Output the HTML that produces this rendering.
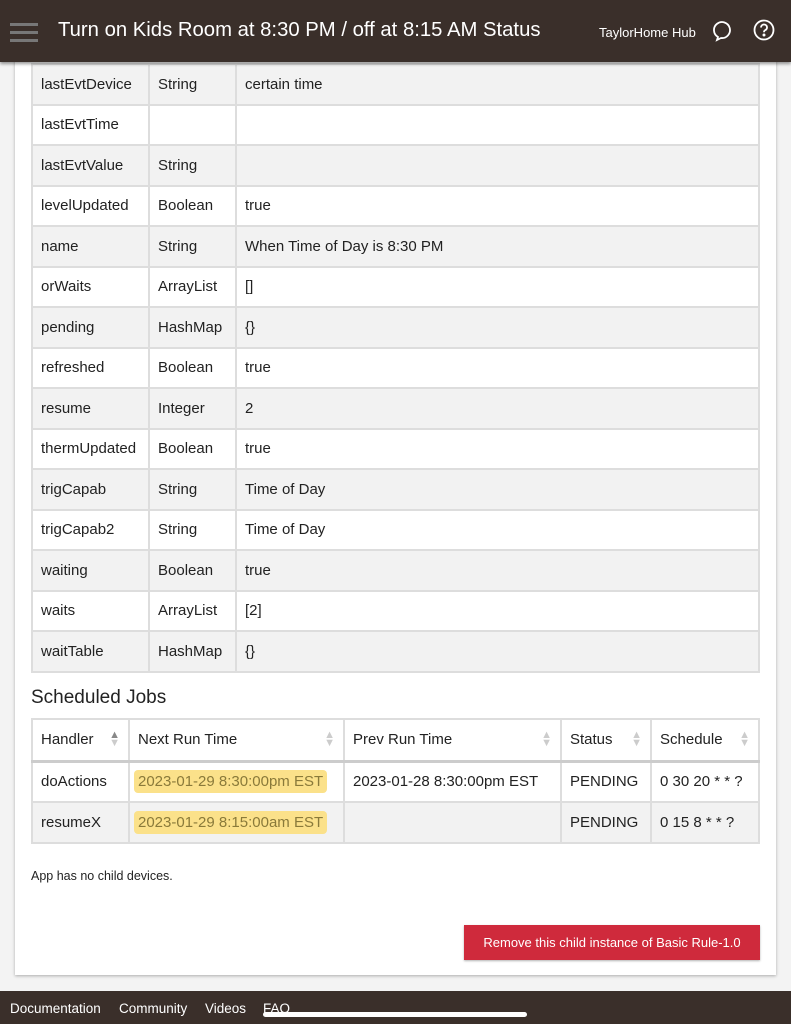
<!DOCTYPE html>
<html><head><meta charset="utf-8"><style>
*{box-sizing:border-box;margin:0;padding:0}
body{width:791px;height:1024px;overflow:hidden;background:#f3f3f3;font-family:"Liberation Sans",sans-serif;color:#222;position:relative}
.hdr{position:absolute;left:0;top:0;width:791px;height:62px;background:#3a2f2a;color:#fff;box-shadow:0 2px 3px rgba(0,0,0,.4);z-index:2}
.hdr .t{position:absolute;left:58px;top:19px;font-size:20.3px}
.hdr .hub{position:absolute;left:599px;top:25px;font-size:13px}
.burger{position:absolute;left:10px;top:23px;width:28px}
.burger i{display:block;height:3px;background:#777;margin-bottom:5px}
.card{position:absolute;left:15px;top:40px;width:761px;height:935px;background:#fff;box-shadow:0 1px 3px rgba(0,0,0,.3)}
table{border-collapse:collapse;position:absolute;left:31px;font-size:15px}
td,th{border:2px solid #ddd;padding:0 8px;text-align:left;font-weight:normal;white-space:nowrap}
.st td{height:40.5px}
.st tr:nth-child(odd){background:#f2f2f2}
.jt th{height:42px}
.jt td{height:41px}
.jt tr.g{background:#f2f2f2}
.hl{background:#fbe18a;color:#8a7a3a;border-radius:4px;padding:3px 4px;margin-left:-4px}
.arr{float:right;color:#ccc;font-size:11px;line-height:8px;margin-top:0}
.h2{position:absolute;left:31px;top:687px;font-size:19px}
.note{position:absolute;left:31px;top:869px;font-size:12.5px}
.btn{position:absolute;left:464px;top:925px;width:296px;height:35px;background:#cf2a3c;color:#fff;font-size:13px;text-align:center;line-height:35px;box-shadow:0 1px 2px rgba(0,0,0,.3)}
.ftr{position:absolute;left:0;top:991px;width:791px;height:33px;background:#3a2f2a;color:#fff;font-size:13.5px}
.ftr span{position:absolute;top:10px}
</style></head><body>
<div class="hdr"><div class="burger"><i></i><i></i><i></i></div>
<div class="t">Turn on Kids Room at 8:30 PM / off at 8:15 AM Status</div>
<div class="hub">TaylorHome Hub</div>
<svg style="position:absolute;left:713px;top:20px" width="22" height="22" viewBox="0 0 22 22" fill="none" stroke="#fff" stroke-width="1.8"><path d="M5 17 L4 20 L8 18 A8 8 0 1 0 5 17Z"/></svg>
<svg style="position:absolute;left:753px;top:19px" width="22" height="22" viewBox="0 0 22 22" fill="none" stroke="#fff" stroke-width="1.8"><circle cx="11" cy="11" r="9.5"/><path d="M8 8.5a3 3 0 1 1 4 2.8c-.8.4-1 1-1 2"/><circle cx="11" cy="16" r=".6" fill="#fff"/></svg>
</div>
<div class="card"></div>
<table class="st" style="top:63px;width:729px">
<colgroup><col style="width:117px"><col style="width:87px"><col></colgroup>
<tr><td>lastEvtDevice</td><td>String</td><td>certain time</td></tr>
<tr><td>lastEvtTime</td><td></td><td></td></tr>
<tr><td>lastEvtValue</td><td>String</td><td></td></tr>
<tr><td>levelUpdated</td><td>Boolean</td><td>true</td></tr>
<tr><td>name</td><td>String</td><td>When Time of Day is 8:30 PM</td></tr>
<tr><td>orWaits</td><td>ArrayList</td><td>[]</td></tr>
<tr><td>pending</td><td>HashMap</td><td>{}</td></tr>
<tr><td>refreshed</td><td>Boolean</td><td>true</td></tr>
<tr><td>resume</td><td>Integer</td><td>2</td></tr>
<tr><td>thermUpdated</td><td>Boolean</td><td>true</td></tr>
<tr><td>trigCapab</td><td>String</td><td>Time of Day</td></tr>
<tr><td>trigCapab2</td><td>String</td><td>Time of Day</td></tr>
<tr><td>waiting</td><td>Boolean</td><td>true</td></tr>
<tr><td>waits</td><td>ArrayList</td><td>[2]</td></tr>
<tr><td>waitTable</td><td>HashMap</td><td>{}</td></tr>
</table>
<div class="h2">Scheduled Jobs</div>
<table class="jt" style="top:718px;width:729px">
<colgroup><col style="width:97px"><col style="width:215px"><col style="width:217px"><col style="width:90px"><col></colgroup>
<tr><th>Handler <span class="arr" style="color:#888">▲<br><span style="color:#ccc">▼</span></span></th><th>Next Run Time <span class="arr">▲<br>▼</span></th><th>Prev Run Time <span class="arr">▲<br>▼</span></th><th>Status <span class="arr">▲<br>▼</span></th><th>Schedule <span class="arr">▲<br>▼</span></th></tr>
<tr style="border-top:3px solid #ccc"><td>doActions</td><td><span class="hl">2023-01-29 8:30:00pm EST</span></td><td>2023-01-28 8:30:00pm EST</td><td>PENDING</td><td>0 30 20 * * ?</td></tr>
<tr class="g"><td>resumeX</td><td><span class="hl">2023-01-29 8:15:00am EST</span></td><td></td><td>PENDING</td><td>0 15 8 * * ?</td></tr>
</table>
<div class="note">App has no child devices.</div>
<div class="btn">Remove this child instance of Basic Rule-1.0</div>
<div class="ftr"><span style="left:10px">Documentation</span><span style="left:119px">Community</span><span style="left:205px">Videos</span><span style="left:263px">FAQ</span>
<div style="position:absolute;left:263px;top:21px;width:264px;height:5px;background:#fff;border-radius:3px"></div></div>
</body></html>
